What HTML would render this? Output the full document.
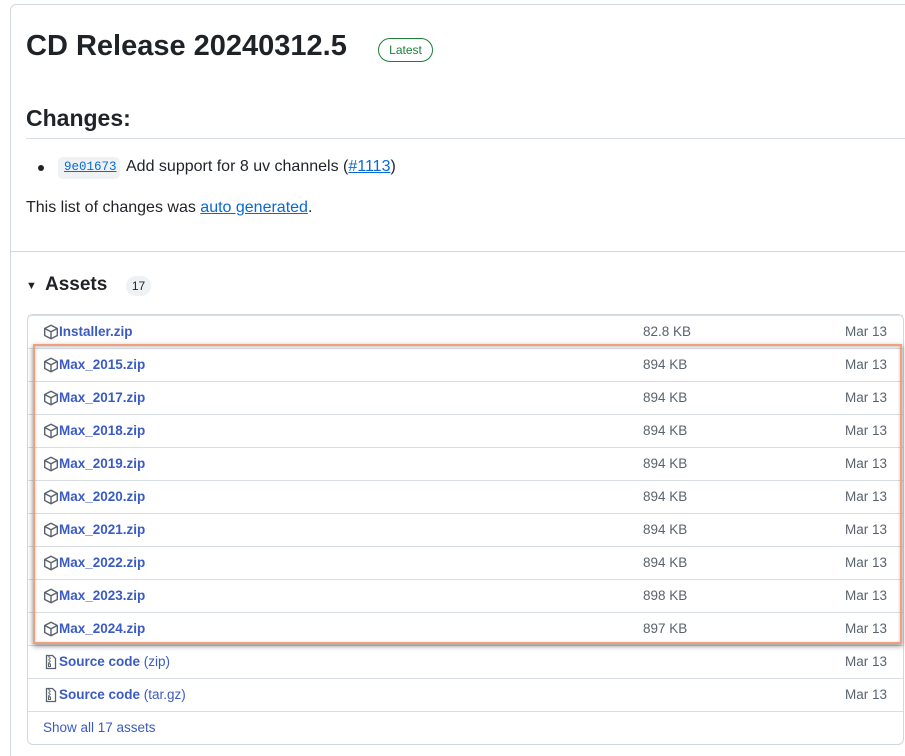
<!DOCTYPE html>
<html><head><meta charset="utf-8"><style>
*{margin:0;padding:0;box-sizing:border-box}
html,body{width:905px;height:756px;overflow:hidden}
body{background:#fff;font-family:"Liberation Sans",sans-serif;color:#1f2328;position:relative}
.card{position:absolute;left:10px;top:4px;width:910px;height:760px;border:1px solid #d0d7de;border-radius:6px}
.a{position:absolute;white-space:nowrap}
a{color:#0969da}
.list{position:absolute;left:27px;top:314px;width:877px;height:431px;border:1px solid #d0d7de;border-radius:6px}
.row{position:absolute;left:0;width:100%;height:33px;border-top:1px solid #d8dee4;font-size:13.5px}
.row:first-child{border-top:none}
.nm{position:absolute;left:31px;top:8px;color:#3b5bc4;font-weight:bold}
.nm span{font-weight:normal}
.sz{position:absolute;left:615px;top:8px;color:#59636e}
.dt{position:absolute;right:16px;top:8px;color:#59636e}
.ic{position:absolute;left:15px;top:8px}
.hl{position:absolute;left:33px;top:344px;width:869px;height:300px;border:2px solid #f0a07a;box-shadow:0 2px 5px rgba(0,0,0,.45), inset 0 1px 3px rgba(0,0,0,.25)}
</style></head><body>
<div class="card"></div>
<div class="a" style="left:26px;top:30px;font-size:29px;font-weight:bold">CD Release 20240312.5</div>
<div class="a" style="left:378px;top:38px;width:55px;height:24px;border:1px solid #1a7f37;border-radius:12px;color:#1a7f37;font-size:12px;text-align:center;line-height:22px">Latest</div>
<div class="a" style="left:26px;top:105px;font-size:23px;font-weight:bold">Changes:</div>
<div class="a" style="left:26px;top:138px;width:880px;height:1px;background:#d8dee4"></div>
<div class="a" style="left:38px;top:165px;width:6px;height:6px;border-radius:3px;background:#1f2328"></div>
<div class="a" style="left:58px;top:157px;width:62px;height:22px;background:#eff2f5;border-radius:5px"></div>
<div class="a" style="left:64px;top:160px;font-family:'Liberation Mono',monospace;font-size:12.5px"><a href="#">9e01673</a></div>
<div class="a" style="left:126px;top:158px;font-size:16px">Add support for 8 uv channels (<a href="#">#1113</a>)</div>
<div class="a" style="left:26px;top:199px;font-size:16px">This list of changes was <a href="#">auto generated</a>.</div>
<div class="a" style="left:10px;top:251px;width:900px;height:1px;background:#d0d7de"></div>
<div class="a" style="left:26px;top:280px;font-size:11px">▼</div>
<div class="a" style="left:45px;top:274px;font-size:19px;font-weight:bold">Assets</div>
<div class="a" style="left:126px;top:276px;width:25px;height:20px;border-radius:10px;background:#eff2f5;font-size:12px;text-align:center;line-height:20px">17</div>
<div class="list">
<svg width="0" height="0" style="position:absolute"><defs>
<symbol id="pk" viewBox="0 0 16 16"><path d="M8 1.2 14.3 4.5V11.5L8 14.8 1.7 11.5V4.5Z M1.7 4.5 8 7.8 14.3 4.5 M8 7.8V14.8" fill="none" stroke="#59636e" stroke-width="1.4" stroke-linejoin="round"/></symbol>
<symbol id="zp" viewBox="0 0 16 16"><path d="M3.5 1.5h6l3 3v10h-9z M6 2v1.5M7 3.5v1.5M6 5v1.5M7 6.5v1.5M6 8v1.5" fill="none" stroke="#59636e" stroke-width="1.3"/><rect x="5.5" y="10" width="2" height="2.5" fill="none" stroke="#59636e" stroke-width="1"/></symbol>
</defs></svg>
<div class="row" style="top:0"><svg class="ic" width="16" height="16"><use href="#pk"/></svg><span class="nm">Installer.zip</span><span class="sz">82.8 KB</span><span class="dt">Mar 13</span></div>
<div class="row" style="top:33px"><svg class="ic" width="16" height="16"><use href="#pk"/></svg><span class="nm">Max_2015.zip</span><span class="sz">894 KB</span><span class="dt">Mar 13</span></div>
<div class="row" style="top:66px"><svg class="ic" width="16" height="16"><use href="#pk"/></svg><span class="nm">Max_2017.zip</span><span class="sz">894 KB</span><span class="dt">Mar 13</span></div>
<div class="row" style="top:99px"><svg class="ic" width="16" height="16"><use href="#pk"/></svg><span class="nm">Max_2018.zip</span><span class="sz">894 KB</span><span class="dt">Mar 13</span></div>
<div class="row" style="top:132px"><svg class="ic" width="16" height="16"><use href="#pk"/></svg><span class="nm">Max_2019.zip</span><span class="sz">894 KB</span><span class="dt">Mar 13</span></div>
<div class="row" style="top:165px"><svg class="ic" width="16" height="16"><use href="#pk"/></svg><span class="nm">Max_2020.zip</span><span class="sz">894 KB</span><span class="dt">Mar 13</span></div>
<div class="row" style="top:198px"><svg class="ic" width="16" height="16"><use href="#pk"/></svg><span class="nm">Max_2021.zip</span><span class="sz">894 KB</span><span class="dt">Mar 13</span></div>
<div class="row" style="top:231px"><svg class="ic" width="16" height="16"><use href="#pk"/></svg><span class="nm">Max_2022.zip</span><span class="sz">894 KB</span><span class="dt">Mar 13</span></div>
<div class="row" style="top:264px"><svg class="ic" width="16" height="16"><use href="#pk"/></svg><span class="nm">Max_2023.zip</span><span class="sz">898 KB</span><span class="dt">Mar 13</span></div>
<div class="row" style="top:297px"><svg class="ic" width="16" height="16"><use href="#pk"/></svg><span class="nm">Max_2024.zip</span><span class="sz">897 KB</span><span class="dt">Mar 13</span></div>
<div class="row" style="top:330px"><svg class="ic" width="16" height="16"><use href="#zp"/></svg><span class="nm">Source code <span>(zip)</span></span><span class="dt">Mar 13</span></div>
<div class="row" style="top:363px"><svg class="ic" width="16" height="16"><use href="#zp"/></svg><span class="nm">Source code <span>(tar.gz)</span></span><span class="dt">Mar 13</span></div>
<div class="row" style="top:396px"><span class="nm" style="left:15px;font-weight:normal;font-size:13.5px">Show all 17 assets</span></div>
</div>
<div class="hl"></div>
</body></html>
